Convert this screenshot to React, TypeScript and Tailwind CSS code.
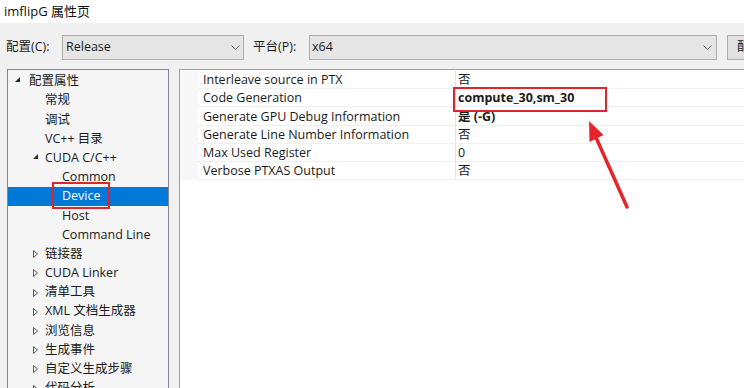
import React from "react";

type TreeItem = { t: string; lvl: 0 | 1 | 2; tri?: "open" | "closed"; sel?: boolean };

const tree: TreeItem[] = [
  { t: "配置属性", lvl: 0, tri: "open" },
  { t: "常规", lvl: 1 },
  { t: "调试", lvl: 1 },
  { t: "VC++ 目录", lvl: 1 },
  { t: "CUDA C/C++", lvl: 1, tri: "open" },
  { t: "Common", lvl: 2 },
  { t: "Device", lvl: 2, sel: true },
  { t: "Host", lvl: 2 },
  { t: "Command Line", lvl: 2 },
  { t: "链接器", lvl: 1, tri: "closed" },
  { t: "CUDA Linker", lvl: 1, tri: "closed" },
  { t: "清单工具", lvl: 1, tri: "closed" },
  { t: "XML 文档生成器", lvl: 1, tri: "closed" },
  { t: "浏览信息", lvl: 1, tri: "closed" },
  { t: "生成事件", lvl: 1, tri: "closed" },
  { t: "自定义生成步骤", lvl: 1, tri: "closed" },
  { t: "代码分析", lvl: 1, tri: "closed" },
];

const props: { k: string; v: string; b?: boolean }[] = [
  { k: "Interleave source in PTX", v: "否" },
  { k: "Code Generation", v: "compute_30,sm_30", b: true },
  { k: "Generate GPU Debug Information", v: "是 (-G)", b: true },
  { k: "Generate Line Number Information", v: "否" },
  { k: "Max Used Register", v: "0" },
  { k: "Verbose PTXAS Output", v: "否" },
];

const indent = ["w-[21px] pl-[7px]", "w-[37px] pl-[25px]", "w-[54px]"];

function Chevron() {
  return (
    <svg width="9" height="5" viewBox="0 0 9 5" className="shrink-0">
      <polyline points="0.5,0.5 4.5,4.5 8.5,0.5" fill="none" stroke="#6b6b6b" strokeWidth="1" />
    </svg>
  );
}

function Tri({ kind }: { kind?: "open" | "closed" }) {
  if (kind === "open")
    return (
      <svg width="6" height="6" viewBox="0 0 6 6" className="-mt-[3px]">
        <polygon points="5,0 5,5 0,5" fill="#2a2a2a" />
      </svg>
    );
  if (kind === "closed")
    return (
      <svg width="6" height="8" viewBox="0 0 6 8">
        <polygon points="0.5,0.5 4.5,4 0.5,7.5" fill="none" stroke="#5a5a5a" strokeWidth="1" />
      </svg>
    );
  return null;
}

export default function App() {
  return (
    <div
      className="relative w-[744px] h-[388px] overflow-hidden bg-[#f0f0f0] text-[12.5px] text-[#1a1a1a]"
      style={{ fontFamily: '"Open Sans", "Noto Sans CJK SC", sans-serif' }}
    >
      {/* title bar */}
      <div className="h-[23px] bg-white flex items-center pl-[4px] text-[13px] text-[#111]">imflipG 属性页</div>

      {/* config row */}
      <div className="mt-[12px] h-[25px] flex items-center whitespace-nowrap">
        <span className="w-[56px] shrink-0 ml-[6px]">配置(C):</span>
        <div className="w-[182px] shrink-0 h-[25px] bg-[#e5e5e5] border border-[#adadad] flex items-center justify-between pl-[3px] pr-[3px]">
          <span>Release</span>
          <Chevron />
        </div>
        <span className="w-[56px] shrink-0 ml-[9px]">平台(P):</span>
        <div className="w-[408px] shrink-0 h-[25px] bg-[#e5e5e5] border border-[#adadad] flex items-center justify-between pl-[2px] pr-[4px]">
          <span>x64</span>
          <Chevron />
        </div>
        <div className="ml-[10px] w-[120px] shrink-0 h-[25px] bg-[#e1e1e1] border border-[#adadad] flex items-center pl-[9px]">
          配置管理器(O)...
        </div>
      </div>

      {/* panels */}
      <div className="mt-[9px] flex h-[330px]">
        {/* tree */}
        <div className="ml-[7px] w-[162px] shrink-0 border border-[#828790] bg-[#f5f5f5] pt-[2px]">
          {tree.map((it, i) => (
            <div
              key={i}
              className={`flex items-center h-[19.2px] whitespace-nowrap ${it.sel ? "bg-[#0078d7] text-white" : ""}`}
            >
              <span className={`${indent[it.lvl]} shrink-0 flex items-center`}>
                <Tri kind={it.tri} />
              </span>
              {it.sel ? (
                <span className="relative">
                  {it.t}
                  <span className="absolute -left-[10px] -right-[9px] -top-[5px] -bottom-[3px] border-2 border-[#e0242c]" />
                </span>
              ) : (
                <span>{it.t}</span>
              )}
            </div>
          ))}
        </div>

        {/* property grid */}
        <div className="ml-[10px] flex-1 border-l border-t border-[#a0a0a0] bg-white pt-[1px]">
          {props.map((p, i) => (
            <div key={i} className="flex h-[18.2px] whitespace-nowrap">
              <div className="w-[18px] shrink-0 bg-[#f7f7f7]" />
              <div className="w-[257px] shrink-0 flex items-center pl-[5px] pt-[2px] border-b border-[#f0f0f0]">{p.k}</div>
              <div className="w-px shrink-0 bg-[#e3e3e3]" />
              <div className={`flex-1 flex items-center pl-[2px] pt-[2px] border-b border-[#f0f0f0] ${p.b ? "font-bold" : ""}`}>
                {p.v}
              </div>
            </div>
          ))}
        </div>
      </div>

      {/* annotation box */}
      <div className="absolute left-[453px] top-[87px] w-[154px] h-[25px] border-2 border-[#e0242c]" />

      {/* annotation arrow */}
      <svg className="absolute left-0 top-0" width="744" height="388" viewBox="0 0 744 388">
        <line x1="627" y1="207" x2="594" y2="133" stroke="#e8242b" strokeWidth="3.5" strokeLinecap="round" />
        <polygon points="589,121 603.5,135 589.5,142" fill="#e8242b" />
      </svg>
    </div>
  );
}
